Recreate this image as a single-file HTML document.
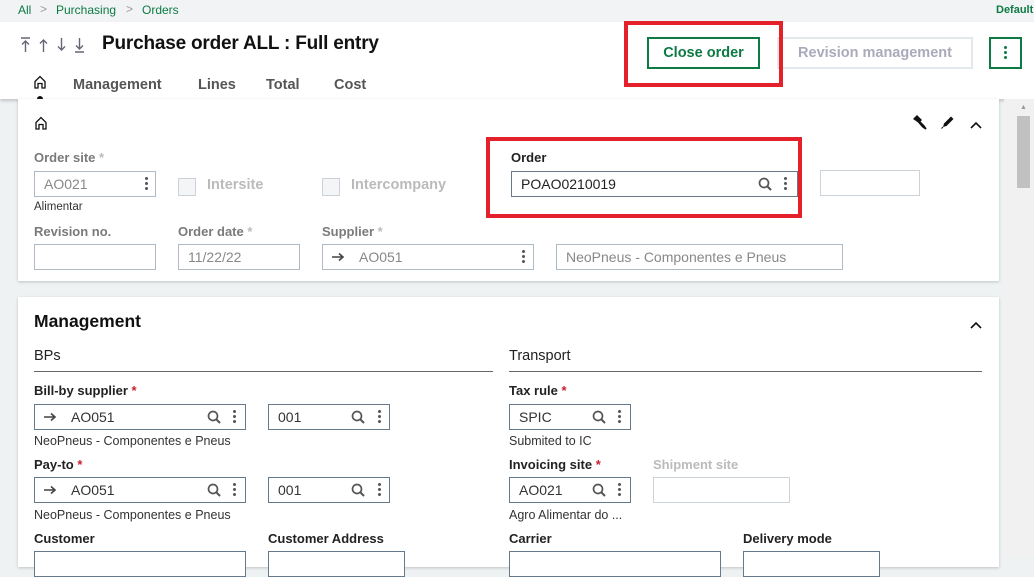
<!DOCTYPE html>
<html><head><meta charset="utf-8"><style>
*{box-sizing:border-box;margin:0;padding:0}
body{width:1034px;height:557px;overflow:hidden;position:relative;background:#eef2f3;font-family:"Liberation Sans","DejaVu Sans",sans-serif;color:#333}
.a{position:absolute}
.crumb{top:0;left:0;width:1034px;height:22px;background:#f1f3f4;font-size:12px;color:#0d7a43}
.hdr{top:22px;left:0;width:1034px;height:77px;background:#fff;box-shadow:0 2px 3px rgba(0,0,0,.18)}
.card{background:#fff;box-shadow:0 1px 3px rgba(0,0,0,.2)}
.lbl{font-size:13px;font-weight:bold;color:#222}
.lg{color:#7a7a7a}
.lgr{color:#bbb}
.in{border:1px solid #66798a;height:26px;background:#fff;font-size:14px;color:#333;padding:0 0 0 9px;line-height:24px}
.in.d{border-color:#aebac4;color:#888}
.in.e{border-color:#ccd3d8}
.sub{font-size:12.5px;color:#333}
.star{color:#c8202f}
.dots{position:absolute;top:5px;width:3px}
.dots i{display:block;width:3px;height:3px;border-radius:50%;background:#555;margin-bottom:2px}
.q{position:absolute;top:5px}
.cb{width:18px;height:18px;border:1px solid #ccd3d8;background:#f3f5f6}
.red{border:4px solid #e4202a}
.arr{position:absolute;left:8px;top:7px}
</style></head><body>
<div class="a crumb"><span class="a" style="left:18px;top:3px">All</span><span class="a" style="left:40px;top:2px;color:#999">&gt;</span><span class="a" style="left:56px;top:3px">Purchasing</span><span class="a" style="left:126px;top:2px;color:#999">&gt;</span><span class="a" style="left:142px;top:3px">Orders</span><span class="a" style="left:996px;top:4px;font-weight:bold;font-size:11px">Default</span></div>
<div class="a hdr">
 <svg class="a" style="left:18px;top:14px" width="72" height="18" viewBox="0 0 72 18" fill="none" stroke="#667" stroke-width="1.4"><path d="M3 2H12M7.5 16V5M4 8.5L7.5 5L11 8.5"/><path d="M25.5 16V4M22 7.5L25.5 4L29 7.5"/><path d="M43.5 2V14M40 10.5L43.5 14L47 10.5"/><path d="M61.5 2V13M58 9.5L61.5 13L65 9.5M57 16H66"/></svg>
 <div class="a" style="left:102px;top:11px;font-size:19px;font-weight:bold;color:#111;letter-spacing:-0.2px">Purchase order ALL : Full entry</div>
 <div class="a" style="left:33px;top:53px"><svg width="14" height="14" viewBox="0 0 14 14"><path d="M2 6.5L7 1.5L12 6.5V13H9V8.5H5V13H2Z" fill="none" stroke="#111" stroke-width="1.3"/></svg></div>
 <div class="a" style="left:37px;top:74px;width:6px;height:6px;border-radius:50%;background:#111"></div>
 <div class="a" style="left:73px;top:55px;font-size:14.5px;font-weight:bold;color:#555">Management</div>
 <div class="a" style="left:198px;top:55px;font-size:14.5px;font-weight:bold;color:#555">Lines</div>
 <div class="a" style="left:266px;top:55px;font-size:14.5px;font-weight:bold;color:#555">Total</div>
 <div class="a" style="left:334px;top:55px;font-size:14.5px;font-weight:bold;color:#555">Cost</div>
 <div class="a" style="left:647px;top:15px;width:113px;height:32px;border:2px solid #0d7a43;color:#0d7a43;font-weight:bold;font-size:14.5px;text-align:center;line-height:28px">Close order</div>
 <div class="a" style="left:777px;top:15px;width:196px;height:32px;border:2px solid #e3e8eb;color:#aab;font-weight:bold;font-size:14.5px;text-align:center;line-height:28px">Revision management</div>
 <div class="a" style="left:989px;top:15px;width:33px;height:32px;border:2px solid #0d7a43"><div class="dots" style="left:13px;top:7px"><i style="background:#0d7a43"></i><i style="background:#0d7a43"></i><i style="background:#0d7a43"></i></div></div>
</div>
<div class="a red" style="left:624px;top:21px;width:159px;height:66px"></div>
<div class="a" style="left:1004px;top:99px;width:30px;height:458px;background:#f1f1f1"></div>
<div class="a" style="left:1017px;top:116px;width:13px;height:72px;background:#c1c1c1"></div>
<div class="a" style="left:1020px;top:104px;font-size:7px;color:#999">▲</div>
<div class="a card" style="left:18px;top:99px;width:981px;height:182px">
 <div class="a" style="left:16px;top:17px"><svg width="14" height="14" viewBox="0 0 14 14"><path d="M2 6.5L7 1.5L12 6.5V13H9V8.5H5V13H2Z" fill="none" stroke="#111" stroke-width="1.3"/></svg></div>
 <div class="a" style="left:893px;top:15px"><svg width="16" height="16" viewBox="0 0 16 16"><path d="M2 5L6 1L11 6L8 9Z" fill="#111"/><path d="M4 3L13 12L15 15L12 13L4 4" fill="#111" stroke="#111" stroke-width="1.5"/></svg></div>
 <div class="a" style="left:922px;top:15px"><svg width="16" height="16" viewBox="0 0 16 16"><path d="M3 13L4 9.5L11 2.5L13.5 5L6.5 12Z" fill="#111"/><path d="M1.5 14.5L3 13" stroke="#111"/></svg></div>
 <div class="a" style="left:951px;top:18px"><svg width="14" height="10" viewBox="0 0 14 10"><path d="M2 8L7 3L12 8" fill="none" stroke="#111" stroke-width="1.6"/></svg></div>
 <div class="a lbl lg" style="left:16px;top:51px">Order site <span class="lgr">*</span></div>
 <div class="a in d" style="left:16px;top:72px;width:122px">AO021<div class="dots" style="left:110px"><i></i><i></i><i></i></div></div>
 <div class="a sub lg" style="left:16px;top:102px;font-size:11.5px">Alimentar</div>
 <div class="a cb" style="left:160px;top:79px"></div><div class="a lbl lgr" style="left:189px;top:78px;font-size:14.5px">Intersite</div>
 <div class="a cb" style="left:304px;top:79px"></div><div class="a lbl lgr" style="left:333px;top:78px;font-size:14.5px">Intercompany</div>
 <div class="a lbl" style="left:493px;top:51px">Order</div>
 <div class="a in" style="left:493px;top:72px;width:287px;color:#222">POAO0210019
  <svg class="q" style="left:246px" width="15" height="15" viewBox="0 0 15 15"><circle cx="6" cy="6" r="4.5" fill="none" stroke="#555" stroke-width="1.7"/><path d="M9.5 9.5L13 13" stroke="#555" stroke-width="2"/></svg>
  <div class="dots" style="left:272px"><i></i><i></i><i></i></div></div>
 <div class="a in e" style="left:802px;top:71px;width:100px"></div>
 <div class="a lbl lg" style="left:16px;top:125px">Revision no.</div>
 <div class="a in d" style="left:16px;top:145px;width:122px"></div>
 <div class="a lbl lg" style="left:160px;top:125px">Order date <span class="lgr">*</span></div>
 <div class="a in d" style="left:160px;top:145px;width:122px">11/22/22</div>
 <div class="a lbl lg" style="left:304px;top:125px">Supplier <span class="lgr">*</span></div>
 <div class="a in d" style="left:304px;top:145px;width:212px;padding-left:36px"><svg class="arr" width="14" height="10" viewBox="0 0 14 10"><path d="M1 5H12M8 1.5L12 5L8 8.5" fill="none" stroke="#444" stroke-width="1.6"/></svg>AO051<div class="dots" style="left:199px"><i></i><i></i><i></i></div></div>
 <div class="a in d" style="left:538px;top:145px;width:287px">NeoPneus - Componentes e Pneus</div>
</div>
<div class="a red" style="left:486px;top:137px;width:316px;height:81px"></div>
<div class="a card" style="left:18px;top:297px;width:981px;height:270px">
 <div class="a" style="left:16px;top:14px;font-size:17.5px;font-weight:bold;color:#111">Management</div>
 <div class="a" style="left:951px;top:20px"><svg width="14" height="10" viewBox="0 0 14 10"><path d="M2 8L7 3L12 8" fill="none" stroke="#111" stroke-width="1.6"/></svg></div>
 <div class="a" style="left:16px;top:51px;font-size:14.5px;color:#222">BPs</div>
 <div class="a" style="left:16px;top:74px;width:459px;height:1px;background:#666"></div>
 <div class="a" style="left:491px;top:51px;font-size:14.5px;color:#222">Transport</div>
 <div class="a" style="left:491px;top:74px;width:473px;height:1px;background:#666"></div>

 <div class="a lbl" style="left:16px;top:86px">Bill-by supplier <span class="star">*</span></div>
 <div class="a in" style="left:16px;top:107px;width:212px;padding-left:36px"><svg class="arr" width="14" height="10" viewBox="0 0 14 10"><path d="M1 5H12M8 1.5L12 5L8 8.5" fill="none" stroke="#444" stroke-width="1.6"/></svg>AO051
  <svg class="q" style="left:172px" width="15" height="15" viewBox="0 0 15 15"><circle cx="6" cy="6" r="4.5" fill="none" stroke="#555" stroke-width="1.7"/><path d="M9.5 9.5L13 13" stroke="#555" stroke-width="2"/></svg><div class="dots" style="left:198px"><i></i><i></i><i></i></div></div>
 <div class="a in" style="left:250px;top:107px;width:122px">001
  <svg class="q" style="left:82px" width="15" height="15" viewBox="0 0 15 15"><circle cx="6" cy="6" r="4.5" fill="none" stroke="#555" stroke-width="1.7"/><path d="M9.5 9.5L13 13" stroke="#555" stroke-width="2"/></svg><div class="dots" style="left:109px"><i></i><i></i><i></i></div></div>
 <div class="a sub" style="left:16px;top:137px">NeoPneus - Componentes e Pneus</div>
 <div class="a lbl" style="left:16px;top:160px">Pay-to <span class="star">*</span></div>
 <div class="a in" style="left:16px;top:180px;width:212px;padding-left:36px"><svg class="arr" width="14" height="10" viewBox="0 0 14 10"><path d="M1 5H12M8 1.5L12 5L8 8.5" fill="none" stroke="#444" stroke-width="1.6"/></svg>AO051
  <svg class="q" style="left:172px" width="15" height="15" viewBox="0 0 15 15"><circle cx="6" cy="6" r="4.5" fill="none" stroke="#555" stroke-width="1.7"/><path d="M9.5 9.5L13 13" stroke="#555" stroke-width="2"/></svg><div class="dots" style="left:198px"><i></i><i></i><i></i></div></div>
 <div class="a in" style="left:250px;top:180px;width:122px">001
  <svg class="q" style="left:82px" width="15" height="15" viewBox="0 0 15 15"><circle cx="6" cy="6" r="4.5" fill="none" stroke="#555" stroke-width="1.7"/><path d="M9.5 9.5L13 13" stroke="#555" stroke-width="2"/></svg><div class="dots" style="left:109px"><i></i><i></i><i></i></div></div>
 <div class="a sub" style="left:16px;top:211px">NeoPneus - Componentes e Pneus</div>
 <div class="a lbl" style="left:16px;top:234px">Customer</div>
 <div class="a in" style="left:16px;top:254px;width:212px"></div>
 <div class="a lbl" style="left:250px;top:234px">Customer Address</div>
 <div class="a in" style="left:250px;top:254px;width:137px"></div>

 <div class="a lbl" style="left:491px;top:86px">Tax rule <span class="star">*</span></div>
 <div class="a in" style="left:491px;top:107px;width:122px">SPIC
  <svg class="q" style="left:82px" width="15" height="15" viewBox="0 0 15 15"><circle cx="6" cy="6" r="4.5" fill="none" stroke="#555" stroke-width="1.7"/><path d="M9.5 9.5L13 13" stroke="#555" stroke-width="2"/></svg><div class="dots" style="left:108px"><i></i><i></i><i></i></div></div>
 <div class="a sub" style="left:491px;top:137px">Submited to IC</div>
 <div class="a lbl" style="left:491px;top:160px">Invoicing site <span class="star">*</span></div>
 <div class="a in" style="left:491px;top:180px;width:122px">AO021
  <svg class="q" style="left:82px" width="15" height="15" viewBox="0 0 15 15"><circle cx="6" cy="6" r="4.5" fill="none" stroke="#555" stroke-width="1.7"/><path d="M9.5 9.5L13 13" stroke="#555" stroke-width="2"/></svg><div class="dots" style="left:108px"><i></i><i></i><i></i></div></div>
 <div class="a sub" style="left:491px;top:211px">Agro Alimentar do ...</div>
 <div class="a lbl lgr" style="left:635px;top:160px">Shipment site</div>
 <div class="a in e" style="left:635px;top:180px;width:137px"></div>
 <div class="a lbl" style="left:491px;top:234px">Carrier</div>
 <div class="a in" style="left:491px;top:254px;width:212px"></div>
 <div class="a lbl" style="left:725px;top:234px">Delivery mode</div>
 <div class="a in" style="left:725px;top:254px;width:137px"></div>
</div>
</body></html>
